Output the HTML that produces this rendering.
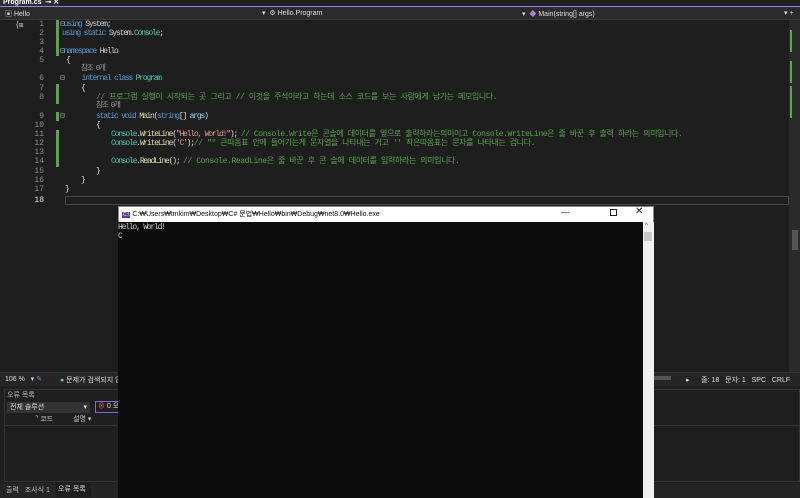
<!DOCTYPE html>
<html><head><meta charset="utf-8"><style>
*{margin:0;padding:0;box-sizing:border-box}
body{width:800px;height:498px;background:#1e1e1e;overflow:hidden;position:relative;font-family:"Liberation Sans","Noto Sans CJK KR",sans-serif;color:#ddd}
.a{position:absolute;white-space:nowrap}
.code{font-family:"Liberation Mono","Noto Sans CJK KR",monospace;font-size:8px;letter-spacing:-1.2px;line-height:9px}
.ln{font-family:"Liberation Mono",monospace;font-size:8px;color:#8a8a8a;width:20px;text-align:right;left:24px;line-height:9px}
.k{color:#569cd6}.t{color:#4ec9b0}.c{color:#57a64a;letter-spacing:-0.4px}.s{color:#d69d85}.y{color:#dcdcaa}.g{color:#999}.lens{color:#999;font-size:7.5px}
.bar{position:absolute;left:56px;width:3px;background:#57a64a}
</style></head><body>
<div class="a" style="left:0;top:0;width:800px;height:7px;background:#1f1f1f"></div>
<div class="a" style="left:0;top:0;width:60px;height:7px;background:#2d2d30;font-size:7px;font-weight:bold;line-height:6px;color:#fff;padding-left:3px">Program.cs &nbsp;⊸ ✕</div>
<div class="a" style="left:0;top:6px;width:800px;height:1px;background:#9184ee"></div>
<div class="a" style="left:0;top:7px;width:800px;height:13px;background:#2b2b2b;border-bottom:1px solid #3a3a3a"></div>
<div class="a" style="left:5px;top:9px;font-size:7px;color:#ddd">▣ Hello</div>
<div class="a" style="left:262px;top:9px;font-size:7px;color:#ddd">▾ &nbsp;⚙ Hello.Program</div>
<div class="a" style="left:522px;top:9px;font-size:7px;color:#ddd">▾ &nbsp;<span style="color:#b180d7">◆</span> Main(string[] args)</div>
<div class="a" style="left:784px;top:9px;font-size:7px;color:#ddd">▾ +</div>
<div class="a" style="left:16px;top:20px;font-size:8px;color:#ccc">{<span style="font-size:6px">⊞</span></div>
<div class="bar" style="top:20px;height:28px"></div>
<div class="bar" style="top:47px;height:9px"></div>
<div class="bar" style="top:84px;height:20px"></div>
<div class="bar" style="top:112px;height:9px"></div>
<div class="bar" style="top:130px;height:37px"></div>
<div class="a" style="left:65px;top:196px;width:724px;height:9px;border:1px solid #464646"></div>

<div class="a ln" style="top:20px">1</div><div class="a code" style="left:60px;top:20px"><span class="g">⊟</span><span class="k">using</span> <span style="color:#ccc">System;</span></div>
<div class="a ln" style="top:29px">2</div><div class="a code" style="left:62px;top:29px"><span class="k">using static</span> <span style="color:#ccc">System.</span><span class="t">Console</span>;</div>
<div class="a ln" style="top:38px">3</div>
<div class="a ln" style="top:47px">4</div><div class="a code" style="left:60px;top:47px"><span class="g">⊟</span><span class="k">namespace</span> <span style="color:#ccc">Hello</span></div>
<div class="a ln" style="top:56px">5</div><div class="a code" style="left:66px;top:56px">{</div>
<div class="a code lens" style="left:81px;top:65px">참조 0개</div>
<div class="a ln" style="top:74px">6</div><div class="a code" style="left:60px;top:74px"><span class="g">⊟</span>&nbsp;&nbsp;&nbsp;&nbsp;&nbsp;<span class="k">internal class</span> <span class="t">Program</span></div>
<div class="a ln" style="top:84px">7</div><div class="a code" style="left:81px;top:84px">{</div>
<div class="a ln" style="top:93px">8</div><div class="a code c" style="left:96px;top:93px">// 프로그램 실행이 시작되는 곳  그리고 // 이것을 주석이라고 하는데 소스 코드를 보는 사람에게 남기는 메모입니다.</div>
<div class="a code lens" style="left:96px;top:102px">참조 0개</div>
<div class="a ln" style="top:112px">9</div><div class="a code" style="left:60px;top:112px"><span class="g">⊟</span></div><div class="a code" style="left:96px;top:112px"><span class="k">static void</span> <span class="y">Main</span>(<span class="k">string</span>[] <span style="color:#9cdcfe">args</span>)</div>
<div class="a ln" style="top:121px">10</div><div class="a code" style="left:96px;top:121px">{</div>
<div class="a ln" style="top:130px">11</div><div class="a code" style="left:111px;top:130px"><span class="t">Console</span>.<span class="y">WriteLine</span>(<span class="s">"Hello, World!"</span>);  <span class="c">// Console.Write은 콘솔에 데이터를 옆으로 출력하라는의미이고 Console.WriteLine은 줄 바꾼 후 출력 하라는 의미입니다.</span></div>
<div class="a ln" style="top:139px">12</div><div class="a code" style="left:111px;top:139px"><span class="t">Console</span>.<span class="y">WriteLine</span>(<span class="s">'C'</span>);<span class="c">// "" 큰따옴표 안에 들어가는게 문자열을 나타내는 거고 '' 작은따옴표는 문자를 나타내는 겁니다.</span></div>
<div class="a ln" style="top:148px">13</div>
<div class="a ln" style="top:157px">14</div><div class="a code" style="left:111px;top:157px"><span class="t">Console</span>.<span class="y">ReadLine</span>(); <span class="c">// Console.ReadLine은 줄 바꾼 후 콘 솔에 데이터를 입력하라는 의미입니다.</span></div>
<div class="a ln" style="top:167px">15</div><div class="a code" style="left:96px;top:167px">}</div>
<div class="a ln" style="top:176px">16</div><div class="a code" style="left:81px;top:176px">}</div>
<div class="a ln" style="top:185px">17</div><div class="a code" style="left:65px;top:185px">}</div>
<div class="a ln" style="top:196px;color:#ddd">18</div>
<div class="a" style="left:789px;top:20px;width:11px;height:352px;background:#2a2a2a"></div>
<div class="a" style="left:790px;top:30px;width:2px;height:22px;background:#57a64a"></div>
<div class="a" style="left:790px;top:61px;width:2px;height:22px;background:#57a64a"></div>
<div class="a" style="left:790px;top:86px;width:2px;height:32px;background:#57a64a"></div>
<div class="a" style="left:792px;top:230px;width:6px;height:20px;background:#555"></div>
<div class="a" style="left:0;top:372px;width:800px;height:14px;background:#252526;border-top:1px solid #333"></div>
<div class="a" style="left:5px;top:375px;font-size:7px;color:#ddd">106 % &nbsp;&nbsp;▾ <span style="color:#9a7bd6">✎</span></div>
<div class="a" style="left:60px;top:375px;font-size:7px;color:#ddd"><span style="color:#6ccf6c">●</span> 문제가 검색되지 않</div>
<div class="a" style="left:653px;top:376px;width:18px;height:4px;background:#555"></div>
<div class="a" style="left:686px;top:375px;font-size:7px;color:#ddd">▸ &nbsp;&nbsp;&nbsp;&nbsp;&nbsp;줄: 18 &nbsp;&nbsp;문자: 1 &nbsp;&nbsp;SPC &nbsp;&nbsp;CRLF</div>
<div class="a" style="left:0;top:387px;width:800px;height:96px;background:#1f1f1f"></div>
<div class="a" style="left:4px;top:389px;width:796px;height:93px;border:1px solid #333"></div>
<div class="a" style="left:7px;top:390px;font-size:7px;color:#bbb">오류 목록</div>
<div class="a" style="left:7px;top:402px;width:83px;height:11px;background:#333;font-size:7px;color:#ddd;padding-left:3px;line-height:11px">전체 솔루션 <span style="float:right;padding-right:3px">▾</span></div>
<div class="a" style="left:95px;top:401px;width:30px;height:12px;border:1px solid #7d6bd6;font-size:7px;line-height:10px;color:#ddd;padding-left:2px"><span style="color:#e0505a">⊗</span> 0 오</div>
<div class="a" style="left:5px;top:414px;width:795px;height:12px;border-bottom:1px solid #333;font-size:7px;color:#ccc;line-height:12px"><span style="margin-left:30px">⌝ 코드</span><span style="margin-left:20px">설명 ▾</span></div>
<div class="a" style="left:0;top:483px;width:800px;height:15px;background:#252526"></div>
<div class="a" style="left:6px;top:485px;font-size:7px;color:#bbb">출력 &nbsp;&nbsp;조사식 1</div>
<div class="a" style="left:55px;top:483px;width:36px;height:14px;background:#1e1e1e;font-size:7px;color:#ddd;line-height:14px;padding-left:3px">오류 목록</div>
<div class="a" style="left:118px;top:206px;width:536px;height:292px;background:#fff;border:1px solid #888"></div>
<div class="a" style="left:122px;top:209px;font-size:7px;color:#111"><span style="background:#5a3d9b;color:#fff;font-size:5px;padding:0 1px">C:\</span> C:₩Users₩tmkim₩Desktop₩C# 문법₩Hello₩bin₩Debug₩net8.0₩Hello.exe</div>
<div class="a" style="left:561px;top:207px;font-size:9px;color:#222">—</div>
<div class="a" style="left:610px;top:209px;width:7px;height:7px;border:1px solid #222"></div>
<div class="a" style="left:635px;top:206px;font-size:10px;color:#222">✕</div>
<div class="a" style="left:118px;top:222px;width:525px;height:276px;background:#0c0c0c"></div>
<div class="a" style="left:643px;top:222px;width:11px;height:276px;background:#f0f0f0"></div>
<div class="a" style="left:644px;top:232px;width:8px;height:9px;background:#c8c8c8"></div>
<div class="a" style="left:645px;top:223px;font-size:6px;color:#555">^</div>
<div class="a code" style="left:118px;top:223px;color:#ccc;line-height:9px">Hello, World!<br>C</div>
</body></html>
